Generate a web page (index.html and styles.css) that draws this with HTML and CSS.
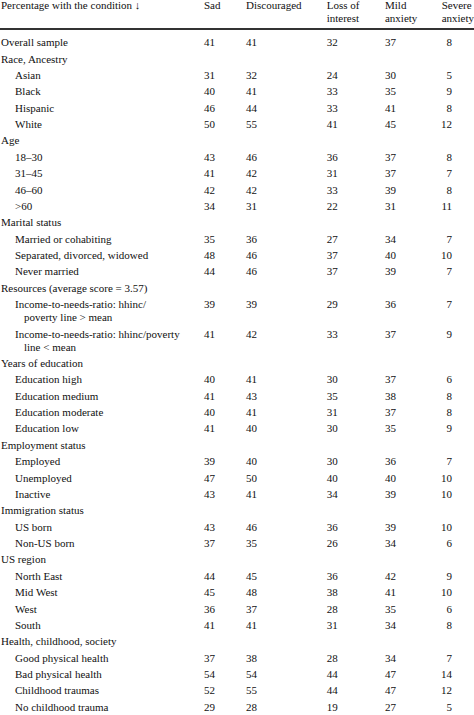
FILE: index.html
```html
<!DOCTYPE html>
<html>
<head>
<meta charset="utf-8">
<link rel="stylesheet" href="styles.css">
</head>
<body>
<table class="data">
<colgroup>
<col class="c-label"><col class="c-sad"><col class="c-disc"><col class="c-loss"><col class="c-mild"><col class="c-sev">
</colgroup>
<thead>
<tr>
<th class="lab">Percentage with the condition ↓</th>
<th>Sad</th>
<th>Discouraged</th>
<th>Loss of<br>interest</th>
<th>Mild<br>anxiety</th>
<th class="sev">Severe<br>anxiety</th>
</tr>
</thead>
<tbody>
<tr class="first"><td class="cat">Overall sample</td><td>41</td><td>41</td><td>32</td><td>37</td><td class="sev">8</td></tr>
<tr><td class="cat">Race, Ancestry</td><td></td><td></td><td></td><td></td><td class="sev"></td></tr>
<tr><td class="sub">Asian</td><td>31</td><td>32</td><td>24</td><td>30</td><td class="sev">5</td></tr>
<tr><td class="sub">Black</td><td>40</td><td>41</td><td>33</td><td>35</td><td class="sev">9</td></tr>
<tr><td class="sub">Hispanic</td><td>46</td><td>44</td><td>33</td><td>41</td><td class="sev">8</td></tr>
<tr><td class="sub">White</td><td>50</td><td>55</td><td>41</td><td>45</td><td class="sev">12</td></tr>
<tr><td class="cat">Age</td><td></td><td></td><td></td><td></td><td class="sev"></td></tr>
<tr><td class="sub">18–30</td><td>43</td><td>46</td><td>36</td><td>37</td><td class="sev">8</td></tr>
<tr><td class="sub">31–45</td><td>41</td><td>42</td><td>31</td><td>37</td><td class="sev">7</td></tr>
<tr><td class="sub">46–60</td><td>42</td><td>42</td><td>33</td><td>39</td><td class="sev">8</td></tr>
<tr><td class="sub">&gt;60</td><td>34</td><td>31</td><td>22</td><td>31</td><td class="sev">11</td></tr>
<tr><td class="cat">Marital status</td><td></td><td></td><td></td><td></td><td class="sev"></td></tr>
<tr><td class="sub">Married or cohabiting</td><td>35</td><td>36</td><td>27</td><td>34</td><td class="sev">7</td></tr>
<tr><td class="sub">Separated, divorced, widowed</td><td>48</td><td>46</td><td>37</td><td>40</td><td class="sev">10</td></tr>
<tr><td class="sub">Never married</td><td>44</td><td>46</td><td>37</td><td>39</td><td class="sev">7</td></tr>
<tr><td class="cat">Resources (average score = 3.57)</td><td></td><td></td><td></td><td></td><td class="sev"></td></tr>
<tr><td class="sub">Income-to-needs-ratio: hhinc/<br>poverty line &gt; mean</td><td>39</td><td>39</td><td>29</td><td>36</td><td class="sev">7</td></tr>
<tr><td class="sub">Income-to-needs-ratio: hhinc/poverty<br>line &lt; mean</td><td>41</td><td>42</td><td>33</td><td>37</td><td class="sev">9</td></tr>
<tr><td class="cat">Years of education</td><td></td><td></td><td></td><td></td><td class="sev"></td></tr>
<tr><td class="sub">Education high</td><td>40</td><td>41</td><td>30</td><td>37</td><td class="sev">6</td></tr>
<tr><td class="sub">Education medium</td><td>41</td><td>43</td><td>35</td><td>38</td><td class="sev">8</td></tr>
<tr><td class="sub">Education moderate</td><td>40</td><td>41</td><td>31</td><td>37</td><td class="sev">8</td></tr>
<tr><td class="sub">Education low</td><td>41</td><td>40</td><td>30</td><td>35</td><td class="sev">9</td></tr>
<tr><td class="cat">Employment status</td><td></td><td></td><td></td><td></td><td class="sev"></td></tr>
<tr><td class="sub">Employed</td><td>39</td><td>40</td><td>30</td><td>36</td><td class="sev">7</td></tr>
<tr><td class="sub">Unemployed</td><td>47</td><td>50</td><td>40</td><td>40</td><td class="sev">10</td></tr>
<tr><td class="sub">Inactive</td><td>43</td><td>41</td><td>34</td><td>39</td><td class="sev">10</td></tr>
<tr><td class="cat">Immigration status</td><td></td><td></td><td></td><td></td><td class="sev"></td></tr>
<tr><td class="sub">US born</td><td>43</td><td>46</td><td>36</td><td>39</td><td class="sev">10</td></tr>
<tr><td class="sub">Non-US born</td><td>37</td><td>35</td><td>26</td><td>34</td><td class="sev">6</td></tr>
<tr><td class="cat">US region</td><td></td><td></td><td></td><td></td><td class="sev"></td></tr>
<tr><td class="sub">North East</td><td>44</td><td>45</td><td>36</td><td>42</td><td class="sev">9</td></tr>
<tr><td class="sub">Mid West</td><td>45</td><td>48</td><td>38</td><td>41</td><td class="sev">10</td></tr>
<tr><td class="sub">West</td><td>36</td><td>37</td><td>28</td><td>35</td><td class="sev">6</td></tr>
<tr><td class="sub">South</td><td>41</td><td>41</td><td>31</td><td>34</td><td class="sev">8</td></tr>
<tr><td class="cat">Health, childhood, society</td><td></td><td></td><td></td><td></td><td class="sev"></td></tr>
<tr><td class="sub">Good physical health</td><td>37</td><td>38</td><td>28</td><td>34</td><td class="sev">7</td></tr>
<tr><td class="sub">Bad physical health</td><td>54</td><td>54</td><td>44</td><td>47</td><td class="sev">14</td></tr>
<tr><td class="sub">Childhood traumas</td><td>52</td><td>55</td><td>44</td><td>47</td><td class="sev">12</td></tr>
<tr><td class="sub">No childhood trauma</td><td>29</td><td>28</td><td>19</td><td>27</td><td class="sev">5</td></tr>
</tbody>
</table>
</body>
</html>
```
FILE: styles.css
```css
html {
  overflow: hidden;
  background: #ffffff;
}
body {
  margin: 0;
  font-family: "Liberation Serif", "Times New Roman", serif;
  font-size: 11px;
  color: #111111;
}
.data {
  border-collapse: collapse;
  table-layout: fixed;
  width: 474px;
  margin-top: -1.5px;
}
.c-label { width: 204px; }
.c-sad { width: 42px; }
.c-disc { width: 80.7px; }
.c-loss { width: 58.3px; }
.c-mild { width: 45px; }
.c-sev { width: 44px; }
.data th {
  font-weight: normal;
  text-align: left;
  vertical-align: top;
  line-height: 13px;
  padding: 0 0 3.5px 0;
  border-bottom: 2px solid #333333;
  white-space: nowrap;
}
.data th.lab { padding-left: 1px; }
.data th.sev { padding-left: 11.7px; }
.data td {
  vertical-align: top;
  line-height: 13px;
  padding: 1.7px 0;
  white-space: nowrap;
}
.data tr.first td { padding-top: 6.2px; }
.data td.cat { padding-left: 1px; }
.data td.sub { padding-left: 24px; text-indent: -9px; }
.data td.sev { text-align: right; padding-right: 22px; }
```
